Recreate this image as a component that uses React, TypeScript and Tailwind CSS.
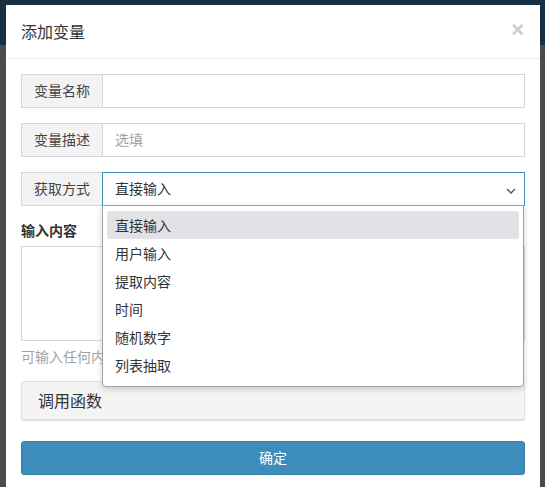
import React from "react";

const items = ["直接输入", "用户输入", "提取内容", "时间", "随机数字", "列表抽取"];

function Row({ label, children, focus }: { label: string; children: React.ReactNode; focus?: boolean }) {
  return (
    <div className="flex h-[34px] mb-[15px] relative">
      <div className="w-[81px] shrink-0 border border-r-0 border-[#d2d6de] bg-[#f3f3f4] flex items-center justify-center text-[14px] text-[#444] pt-[1px]">
        {label}
      </div>
      <div
        className={
          "flex-1 border flex items-center pl-[12px] pr-[4px] pt-[1px] text-[14px] " +
          (focus ? "border-[#3c8dbc]" : "border-[#d2d6de]")
        }
      >
        {children}
      </div>
    </div>
  );
}

export default function App() {
  return (
    <div
      className="h-[487px] w-[545px] overflow-hidden bg-[linear-gradient(to_bottom,#172f42_45px,#4a4b4c_45px)] pt-[5px]"
      style={{ fontFamily: '"Liberation Sans", "Noto Sans CJK SC", sans-serif' }}
    >
      <div className="ml-[6px] w-[534px] h-[482px] bg-white">
        <div className="h-[54px] border-b border-[#ececec] px-[15px] flex items-center justify-between">
          <div className="text-[16px] text-[#333] mt-[3px]">添加变量</div>
          <div className="text-[22px] font-bold leading-none text-[#cbcbcb] mr-[1px] -mt-[4px]">×</div>
        </div>
        <div className="px-[15px] pt-[15px]">
          <Row label="变量名称">
            <span />
          </Row>
          <Row label="变量描述">
            <span className="text-[#a3a3a3]">选填</span>
          </Row>
          <div className="relative">
            <Row label="获取方式" focus>
              <span className="flex-1 text-[#333]">直接输入</span>
              <svg width="10" height="6" viewBox="0 0 10 6" className="mr-[4px] mt-[2px]">
                <path d="M1 1l4 4 4-4" fill="none" stroke="#555" strokeWidth="1.4" />
              </svg>
            </Row>
            <div className="absolute z-10 top-[33px] left-[81px] w-[422px] h-[182px] bg-white border border-[#a2a2a2] rounded-b-[4px] shadow-[0_2px_6px_rgba(0,0,0,0.18)] pt-[5px] px-[4px]">
              {items.map((it, i) => (
                <div
                  key={it}
                  className={
                    "h-[28px] flex items-center pl-[8px] pt-[2px] text-[14px] text-[#333] rounded-[3px] " +
                    (i === 0 ? "bg-[#e1e1e6]" : "")
                  }
                >
                  {it}
                </div>
              ))}
            </div>
          </div>
          <div className="text-[14px] font-bold text-[#333] leading-[20px] mb-[5px]">输入内容</div>
          <div className="h-[95px] border border-[#d2d6de]" />
          <div className="mt-[6px] text-[14px] leading-[20px] text-[#a3a3a3]">可输入任何内容</div>
          <div className="mt-[14px] h-[39px] border border-[#e0e0e0] bg-[#f4f4f4] rounded-[3px] shadow-[0_1px_1px_rgba(0,0,0,0.12)] flex items-center pl-[16px] pt-[2px] text-[16px] text-[#333]">
            调用函数
          </div>
          <div className="mt-[21px] h-[34px] bg-[#3c8dbc] border border-[#367fa9] rounded-[3px] flex items-center justify-center text-[14px] text-white">
            确定
          </div>
        </div>
      </div>
    </div>
  );
}
